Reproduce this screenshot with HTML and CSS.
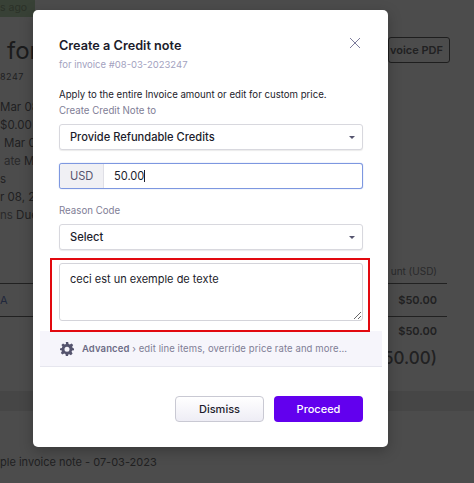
FILE: index.html
```html
<!DOCTYPE html>
<html lang="en">
<head>
  <meta charset="UTF-8">
  <title>Create a Credit note</title>
  <link rel="stylesheet" href="styles.css">
</head>
<body>
  <div class="page">
    <div class="top-badge">s ago</div>
    <div class="head-row">
      <div class="page-title">for</div>
      <div class="pdf-btn">voice PDF</div>
    </div>
    <div class="invoice-no">8247</div>
    <div class="meta">
      <div>Mar 08</div>
      <div>$0.00</div>
      <div class="indent">Mar 0</div>
      <div class="indent"><span class="muted">ate</span> Ma</div>
      <div>s</div>
      <div>r 08, 2</div>
      <div><span class="muted">ns</span> Due</div>
    </div>
    <div class="table-row table-head"><span></span><span class="muted">unt (USD)</span></div>
    <div class="table-row"><span class="link">A</span><b>$50.00</b></div>
    <div class="table-row no-line"><span></span><b>$50.00</b></div>
    <div class="total">50.00)</div>
    <div class="band"></div>
    <div class="note">ple invoice note - 07-03-2023</div>
  </div>

  <div class="overlay"></div>

  <div class="modal">
    <div class="modal-head">
      <h1>Create a Credit note</h1>
      <svg class="close" width="12" height="12" viewBox="0 0 12 12"><path d="M1 1l10 10M11 1L1 11" stroke="#7d7c9c" stroke-width="1" fill="none"/></svg>
    </div>
    <div class="sub">for invoice #08-03-2023247</div>
    <p class="intro">Apply to the entire Invoice amount or edit for custom price.</p>
    <div class="label">Create Credit Note to</div>
    <div class="field select"><span>Provide Refundable Credits</span><i class="caret"></i></div>
    <div class="field amount">
      <span class="currency">USD</span>
      <span class="value">50.00<i class="cursor"></i></span>
    </div>
    <div class="label reason">Reason Code</div>
    <div class="field select"><span>Select</span><i class="caret"></i></div>
    <textarea class="notes">ceci est un exemple de texte</textarea>
    <div class="advanced">
      <svg width="14" height="14" viewBox="0 0 24 24"><path fill="#55546e" fill-rule="evenodd" d="M10 0h4l.7 3.3c.8.2 1.5.5 2.2.9L19.8 2.400l2.800 2.800-1.800 2.900c.4.700.7 1.400.9 2.200L24 11v3l-3.300.7c-.2.800-.5 1.500-.9 2.200l1.800 2.900-2.800 2.800-2.900-1.800c-.7.400-1.400.7-2.200.9L14 24h-4l-.7-3.300c-.8-.2-1.500-.5-2.200-.9l-2.900 1.800-2.800-2.800 1.800-2.900c-.4-.7-.7-1.400-.9-2.200L0 14v-3l3.300-.9c.2-.8.5-1.500.9-2.200L2.400 5.200l2.800-2.800 2.900 1.800c.7-.4 1.400-.7 2.200-.9zM12 8a4.300 4.300 0 1 0 0 8.600A4.300 4.300 0 0 0 12 8z"/></svg>
      <span class="adv-text"><b>Advanced</b> › edit line items, override price rate and more...</span>
    </div>
    <div class="actions">
      <button class="dismiss">Dismiss</button>
      <button class="proceed">Proceed</button>
    </div>
    <div class="highlight"></div>
  </div>
</body>
</html>
```

FILE: styles.css
```css
* { box-sizing: border-box; }
html, body { height: 100%; }
body {
  margin: 0;
  overflow: hidden;
  position: relative;
  background: #fff;
  font-family: Inter, "Liberation Sans", sans-serif;
  color: #6e6e72;
}

/* page behind the modal */
.page { height: 483px; overflow: hidden; }
.top-badge {
  width: 35px;
  height: 17px;
  background: #bcd9b4;
  color: #8fa585;
  font-size: 10.500px;
  line-height: 15px;
  border-bottom-right-radius: 3px;
}
.head-row {
  display: flex;
  justify-content: space-between;
  align-items: center;
  height: 26px;
  margin-top: 20px;
  padding: 0 24px 0 7px;
}
.page-title { font-size: 24px; color: #5c5c60; }
.pdf-btn {
  width: 62px;
  height: 26px;
  border: 1px solid #666;
  border-radius: 3px;
  font-size: 11px;
  font-weight: 600;
  line-height: 24px;
  text-align: right;
  padding-right: 6px;
}
.invoice-no { margin-top: 8px; font-size: 9px; line-height: 11px; letter-spacing: 0.5px; }
.meta { margin-top: 16px; font-size: 11.500px; line-height: 18px; }
.indent { padding-left: 4px; }
.muted { color: #8c8c90; }
.table-row {
  display: flex;
  justify-content: space-between;
  align-items: center;
  height: 33px;
  margin-right: 27px;
  padding-right: 10px;
  border-bottom: 1px solid #707070;
  font-size: 11px;
}
.table-row b { font-weight: 600; }
.table-head { margin-top: 34px; height: 26px; font-size: 10px; }
.link { color: #6d84c8; }
.no-line { border: 0; height: 28px; }
.total {
  margin-top: 1px;
  padding-right: 37px;
  text-align: right;
  font-size: 17px;
  font-weight: 500;
  line-height: 24px;
}
.band { height: 20px; margin-top: 21px; background: #ebebeb; }
.note { margin-top: 44px; font-size: 11px; }

.overlay {
  position: absolute;
  inset: 0;
  background: rgba(0, 0, 0, 0.7);
}

/* modal */
.modal {
  position: absolute;
  left: 33px;
  top: 10px;
  width: 355px;
  height: 437px;
  padding: 26px 25px 0 26px;
  background: #fff;
  border-radius: 5px;
  box-shadow: 0 4px 14px rgba(0, 0, 0, 0.25);
  color: #1c1c2b;
}
.modal-head {
  display: flex;
  justify-content: space-between;
  align-items: center;
  height: 18px;
}
.modal-head h1 { margin: 0; font-size: 12.700px; font-weight: 600; }
.close { margin: -4px 2px 0 0; }
.sub { margin-top: 4px; font-size: 9.500px; line-height: 14px; color: #a3a2c0; }
.intro { margin: 15px 0 0; font-size: 9.650px; line-height: 15px; }
.label { margin-top: 1px; font-size: 9.700px; line-height: 15px; color: #7f7e96; }
.reason { margin-top: 14px; }
.field {
  display: flex;
  align-items: center;
  height: 26px;
  margin-top: 6px;
  background: #fff;
  border: 1px solid #d8d8de;
  border-radius: 3px;
  box-shadow: 0 1px 1px rgba(0, 0, 0, 0.08);
  font-size: 11.100px;
  font-weight: 500;
}
.select { justify-content: space-between; padding: 0 7px 0 10px; }
.caret {
  width: 0;
  height: 0;
  border: 3px solid transparent;
  border-top: 3.500px solid #55546e;
  border-bottom: 0;
}
.amount {
  margin-top: 13px;
  border-color: #7d97e0;
  box-shadow: 0 0 1px #7d97e0;
  overflow: hidden;
}
.currency {
  width: 44px;
  height: 100%;
  background: #f0f0f4;
  border-right: 1px solid #dfdfe6;
  color: #55546e;
  font-weight: 400;
  line-height: 24px;
  padding-left: 10px;
}
.value { padding-left: 10px; font-weight: 400; }
.cursor {
  display: inline-block;
  width: 1px;
  height: 12px;
  background: #1c1c2b;
  vertical-align: -2px;
}
.notes {
  display: block;
  width: 304px;
  height: 58px;
  margin-top: 13px;
  padding: 8px 10px;
  border: 1px solid #d4d4da;
  border-radius: 3px;
  font-family: inherit;
  font-size: 11px;
  color: #1c1c2b;
  outline: none;
}
.advanced {
  display: flex;
  align-items: center;
  gap: 8px;
  height: 36px;
  margin: 10px -19px 0 -19px;
  padding-left: 20px;
  background: #f6f5fb;
  border-bottom: 1px solid #e6e6ee;
  font-size: 9.500px;
  color: #7f7e96;
  letter-spacing: 0.1px;
}
.adv-text b { font-weight: 600; color: #6d6c86; }
.actions {
  display: flex;
  justify-content: flex-end;
  gap: 10px;
  margin-top: 29px;
}
.actions button {
  width: 89px;
  height: 26px;
  border-radius: 4px;
  font-family: inherit;
  font-size: 11px;
  font-weight: 500;
}
.dismiss {
  background: linear-gradient(#fff, #eeedf5);
  border: 1px solid #c9c9d3;
  color: #1c1c2b;
}
.proceed { background: #6200ee; border: 0; color: #fff; }

/* red annotation drawn over the screenshot */
.highlight {
  position: absolute;
  left: 17px;
  top: 248px;
  width: 320px;
  height: 74px;
  border: 2px solid #e2090f;
  pointer-events: none;
}
```
